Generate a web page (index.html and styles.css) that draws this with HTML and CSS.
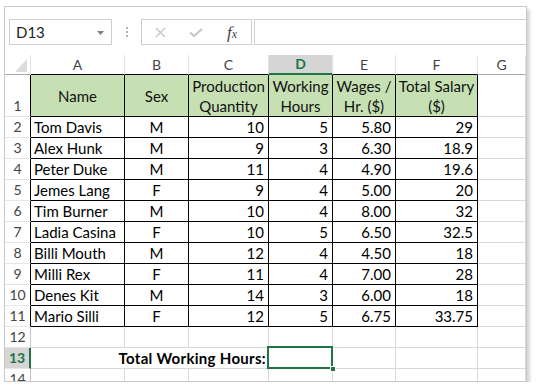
FILE: index.html
```html
<!DOCTYPE html>
<html>
<head>
<meta charset="utf-8">
<link rel="stylesheet" href="styles.css">
</head>
<body>
<div class="window">
  <div class="fbar">
    <div class="namebox">
      <span class="ref">D13</span>
      <svg class="dd" width="7" height="4" viewBox="0 0 7 4"><path d="M0 0H7L3.5 4Z" fill="#807c8c"/></svg>
    </div>
    <svg class="grip" width="2" height="10" viewBox="0 0 2 10"><rect x="0" y="0" width="2" height="2" fill="#b4b4b4"/><rect x="0" y="4" width="2" height="2" fill="#b4b4b4"/><rect x="0" y="8" width="2" height="2" fill="#b4b4b4"/></svg>
    <div class="fbtns">
      <svg width="11" height="11" viewBox="0 0 11 11"><path d="M1 1L10 10M10 1L1 10" stroke="#c4c4c4" stroke-width="1.4" fill="none"/></svg>
      <svg class="chk" width="14" height="9" viewBox="0 0 14 9"><path d="M1 4.5L5 8L13 1" stroke="#c4c4c4" stroke-width="2" fill="none"/></svg>
      <span class="fx">f<small>x</small></span>
    </div>
    <div class="finput"></div>
  </div>

  <div class="sheet">
    <div class="c ch corner"><div class="tri"></div></div>
    <div class="c ch tb">A</div>
    <div class="c ch tb">B</div>
    <div class="c ch tb">C</div>
    <div class="c ch tb chsel">D</div>
    <div class="c ch tb">E</div>
    <div class="c ch tb">F</div>
    <div class="c ch">G</div>

    <div class="c rh tl">1</div>
    <div class="c t hd">Name</div>
    <div class="c t hd">Sex</div>
    <div class="c t hd">Production<br>Quantity</div>
    <div class="c t hd">Working<br>Hours</div>
    <div class="c t hd">Wages /<br>Hr. ($)</div>
    <div class="c t hd">Total Salary<br>($)</div>
    <div class="c"></div>

    <div class="c rh tl">2</div><div class="c t">Tom Davis</div><div class="c t m">M</div><div class="c t r">10</div><div class="c t r">5</div><div class="c t r">5.80</div><div class="c t r">29</div><div class="c"></div>
    <div class="c rh tl">3</div><div class="c t">Alex Hunk</div><div class="c t m">M</div><div class="c t r">9</div><div class="c t r">3</div><div class="c t r">6.30</div><div class="c t r">18.9</div><div class="c"></div>
    <div class="c rh tl">4</div><div class="c t">Peter Duke</div><div class="c t m">M</div><div class="c t r">11</div><div class="c t r">4</div><div class="c t r">4.90</div><div class="c t r">19.6</div><div class="c"></div>
    <div class="c rh tl">5</div><div class="c t">Jemes Lang</div><div class="c t m">F</div><div class="c t r">9</div><div class="c t r">4</div><div class="c t r">5.00</div><div class="c t r">20</div><div class="c"></div>
    <div class="c rh tl">6</div><div class="c t">Tim Burner</div><div class="c t m">M</div><div class="c t r">10</div><div class="c t r">4</div><div class="c t r">8.00</div><div class="c t r">32</div><div class="c"></div>
    <div class="c rh tl">7</div><div class="c t">Ladia Casina</div><div class="c t m">F</div><div class="c t r">10</div><div class="c t r">5</div><div class="c t r">6.50</div><div class="c t r">32.5</div><div class="c"></div>
    <div class="c rh tl">8</div><div class="c t">Billi Mouth</div><div class="c t m">M</div><div class="c t r">12</div><div class="c t r">4</div><div class="c t r">4.50</div><div class="c t r">18</div><div class="c"></div>
    <div class="c rh tl">9</div><div class="c t">Milli Rex</div><div class="c t m">F</div><div class="c t r">11</div><div class="c t r">4</div><div class="c t r">7.00</div><div class="c t r">28</div><div class="c"></div>
    <div class="c rh tl">10</div><div class="c t">Denes Kit</div><div class="c t m">M</div><div class="c t r">14</div><div class="c t r">3</div><div class="c t r">6.00</div><div class="c t r">18</div><div class="c"></div>
    <div class="c rh tl">11</div><div class="c t">Mario Silli</div><div class="c t m">F</div><div class="c t r">12</div><div class="c t r">5</div><div class="c t r">6.75</div><div class="c t r">33.75</div><div class="c"></div>

    <div class="c rh">12</div><div class="c"></div><div class="c"></div><div class="c"></div><div class="c"></div><div class="c"></div><div class="c"></div><div class="c"></div>

    <div class="c rh rhsel">13</div>
    <div class="c r span3 bold">Total Working Hours:</div>
    <div class="c sel"><span class="handle"></span></div>
    <div class="c"></div><div class="c"></div><div class="c"></div>

    <div class="c rh">14</div><div class="c"></div><div class="c"></div><div class="c"></div><div class="c"></div><div class="c"></div><div class="c"></div><div class="c"></div>
  </div>
</div>
</body>
</html>
```

FILE: styles.css
```css
* { box-sizing: border-box; }

html, body {
  margin: 0;
  padding: 0;
  background: #ffffff;
}

body {
  font-family: Lato, "Liberation Sans", sans-serif;
  font-size: 15px;
  color: #000;
}

.window {
  width: 523px;
  height: 376px;
  margin: 6px 0 0 4px;
  border: 1px solid #c9c9c9;
  background: #fff;
  overflow: hidden;
  box-shadow: 3px 3px 3px rgba(0, 0, 0, 0.16);
}

/* formula bar */
.fbar {
  display: flex;
  align-items: center;
  padding: 12px 0 0 4px;
  height: 38px;
}

.namebox {
  width: 103px;
  height: 26px;
  border: 1px solid #cfcfcf;
  display: flex;
  align-items: center;
  justify-content: space-between;
  padding: 0 7px 0 6px;
}

.ref {
  font-size: 15px;
  color: #1d1d2a;
}

.dd { margin-top: 1px; }

.grip {
  margin-left: 14px;
  margin-right: 13px;
}

.fbtns {
  width: 111px;
  height: 26px;
  border: 1px solid #cfcfcf;
  display: flex;
  align-items: center;
  padding-left: 13px;
}

.chk { margin-left: 23px; }

.fx {
  margin-left: 24px;
  font-family: "Liberation Serif", serif;
  font-style: italic;
  font-size: 17px;
  color: #444;
  line-height: 1;
}

.fx small {
  font-size: 12px;
}

.finput {
  flex: 1;
  height: 26px;
  margin-left: 2px;
  border: 1px solid #cfcfcf;
  border-right: none;
}

/* sheet grid */
.sheet {
  margin-top: 10px;
  display: grid;
  grid-template-columns: 26px 94px 64px 80px 64px 63px 82px 1fr;
  grid-template-rows: 20px 42px repeat(13, 21px);
}

.c {
  border-right: 1px solid #d9d9d9;
  border-bottom: 1px solid #d9d9d9;
  display: flex;
  align-items: flex-end;
  line-height: 20px;
  padding: 0 3px;
  white-space: nowrap;
}

.ch {
  justify-content: center;
  align-items: center;
  font-size: 14px;
  color: #444;
  border-right-color: #e3e3e3;
  border-bottom-color: #ababab;
  line-height: 18px;
}

.corner {
  justify-content: flex-end;
  align-items: flex-end;
  padding: 0 3px 2px 0;
}

.tri {
  width: 12px;
  height: 13px;
  background: #dcdcdc;
  clip-path: polygon(100% 0, 100% 100%, 0 100%);
}

.chsel {
  background-color: #dedede;
  background-image: radial-gradient(#cbcbcb 0.6px, transparent 0.8px);
  background-size: 2px 2px;
  color: #217346;
  font-weight: bold;
  border-bottom: 2px solid #217346 !important;
}

.rh {
  justify-content: center;
  font-size: 14px;
  color: #444;
  border-right-color: #c6c6c6;
  border-bottom-color: #e6e6e6;
  padding: 0;
}

.rhsel {
  background-color: #dedede;
  background-image: radial-gradient(#cbcbcb 0.6px, transparent 0.8px);
  background-size: 2px 2px;
  color: #217346;
  font-weight: bold;
  border-right: 2px solid #217346;
}

.tb { border-bottom-color: #000; }
.tl { border-right-color: #000; }

.t {
  border-right-color: #000;
  border-bottom-color: #000;
}

.hd {
  background: #c6e0b4;
  justify-content: center;
  align-items: center;
  text-align: center;
  color: #111;
}

.m { justify-content: center; }
.r { justify-content: flex-end; padding-right: 4px; }

.span3 {
  grid-column: span 3;
}

.bold {
  font-weight: bold;
  letter-spacing: 0.3px;
  padding-right: 2px;
}

.sel {
  position: relative;
}

.sel::after {
  content: "";
  position: absolute;
  left: -2px;
  top: -2px;
  right: -1px;
  bottom: -1px;
  border: 2px solid #217346;
}

.handle {
  position: absolute;
  right: -4px;
  bottom: -4px;
  width: 6px;
  height: 6px;
  background: #217346;
  border: 1px solid #fff;
  z-index: 2;
}
```
